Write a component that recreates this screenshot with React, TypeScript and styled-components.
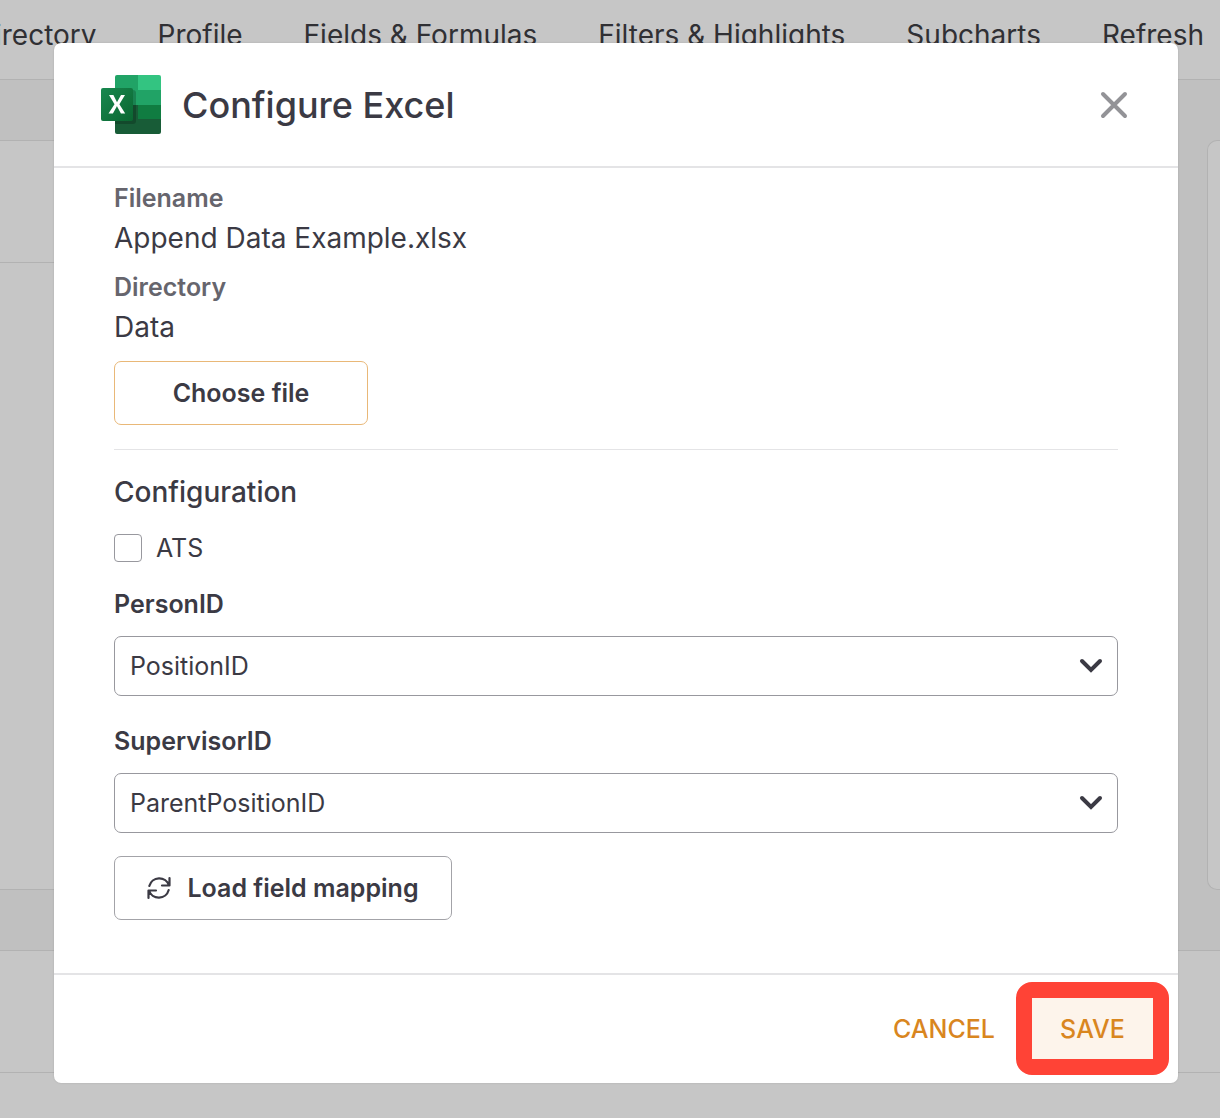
import React from "react";
import styled, { createGlobalStyle } from "styled-components";

const ink = "#3b3a44";
const line = "#e4e4e6";

const GlobalStyle = createGlobalStyle`
  *, *::before, *::after { box-sizing: border-box; }
  body {
    margin: 0;
    background: #c6c6c6;
    color: ${ink};
    font-family: Inter, "Liberation Sans", sans-serif;
  }
  button, select, input { font: inherit; color: inherit; }
`;

const Page = styled.div`
  position: relative;
  min-height: 100vh;
  overflow: hidden;
`;

const Nav = styled.nav`
  display: flex;
  justify-content: flex-end;
  gap: 61px;
  height: 80px;
  padding: 15px 16px 0 0;
  border-bottom: 1px solid #b2b2b2;
`;

const NavLink = styled.a`
  color: #303034;
  font-size: 28px;
  line-height: 40px;
  text-decoration: none;
  white-space: nowrap;
`;

const Workspace = styled.div`
  display: flex;
  gap: 60px;
  padding: 60px 0;
  background: #c0c0c0;
  border-bottom: 1px solid #b2b2b2;
`;

const MainPanel = styled.div`
  flex: 1;
  background: #c6c6c6;
  border: solid #b2b2b2;
  border-width: 1px 1px 1px 0;
`;

const PanelHead = styled.div`
  height: 122px;
  border-bottom: 1px solid #b2b2b2;
`;

const PanelBody = styled.div`
  height: 626px;
`;

const SidePanel = styled.div`
  width: 13px;
  background: #c6c6c6;
  border: solid #b2b2b2;
  border-width: 1px 0 1px 1px;
  border-radius: 10px 0 0 10px;
`;

const PageFooter = styled.div`
  height: 122px;
  border-bottom: 1px solid #b2b2b2;
`;

const Overlay = styled.div`
  position: absolute;
  inset: 0;
  padding: 43px 42px 36px 54px;
`;

const Dialog = styled.section`
  background: #fff;
  border-radius: 7px;
  box-shadow: 0 0 2px rgba(0, 0, 0, 0.15);
`;

const DialogHeader = styled.header`
  display: flex;
  align-items: center;
  gap: 21px;
  height: 125px;
  padding: 0 50px 0 47px;
  border-bottom: 2px solid ${line};
`;

const Title = styled.h1`
  flex: 1;
  margin: 0;
  font-size: 36px;
  font-weight: 500;
  line-height: 44px;
`;

const CloseButton = styled.button`
  display: flex;
  padding: 0;
  border: 0;
  background: none;
  cursor: pointer;
`;

const DialogBody = styled.div`
  padding: 10px 60px 53px;
`;

const FileDetails = styled.dl`
  display: grid;
  gap: 9px;
  margin: 0 0 14px;
`;

const Term = styled.dt`
  color: #66656d;
  font-size: 25px;
  font-weight: 600;
  line-height: 40px;
`;

const Value = styled.dd`
  margin: 0;
  font-size: 28px;
  line-height: 40px;
`;

const OutlineButton = styled.button<{ $accent?: boolean; $width: number }>`
  display: flex;
  align-items: center;
  justify-content: center;
  gap: 16px;
  width: ${(p) => p.$width}px;
  height: 64px;
  padding: 0;
  background: #fff;
  border: 1px solid ${(p) => (p.$accent ? "#e9b878" : "#a3a3a8")};
  border-radius: 7px;
  font-size: 25px;
  font-weight: 600;
  cursor: pointer;
`;

const Divider = styled.hr`
  height: 1px;
  margin: 24px 0 22px;
  border: 0;
  background: ${line};
`;

const SectionTitle = styled.h2`
  margin: 0;
  font-size: 28px;
  font-weight: 500;
  line-height: 40px;
`;

const CheckRow = styled.label`
  display: flex;
  align-items: center;
  gap: 14px;
  margin: 16px 0;
  font-size: 25px;
  line-height: 40px;
`;

const CheckBox = styled.input`
  appearance: none;
  width: 28px;
  height: 28px;
  margin: 0;
  border: 1px solid #98989e;
  border-radius: 4px;
  background: #fff;
`;

const Fields = styled.div`
  display: grid;
  gap: 25px;
  margin-bottom: 23px;
`;

const Field = styled.div`
  display: grid;
  gap: 12px;
`;

const FieldLabel = styled.label`
  font-size: 25px;
  font-weight: 600;
  line-height: 40px;
`;

const SelectBox = styled.div`
  display: grid;
  align-items: center;

  > * { grid-area: 1 / 1; }
  > svg { justify-self: end; margin-right: 15px; pointer-events: none; }
`;

const Select = styled.select`
  appearance: none;
  width: 100%;
  height: 60px;
  padding: 0 50px 0 15px;
  border: 1px solid #98989e;
  border-radius: 7px;
  background: #fff;
  font-size: 25px;
`;

const DialogFooter = styled.footer`
  display: flex;
  align-items: center;
  justify-content: flex-end;
  gap: 21px;
  padding: 7px 9px 8px;
  border-top: 2px solid ${line};
`;

const TextButton = styled.button`
  padding: 0;
  border: 0;
  background: none;
  color: #d9861f;
  font-size: 25px;
  font-weight: 500;
  line-height: 40px;
  cursor: pointer;
`;

const SaveButton = styled(TextButton)`
  width: 153px;
  height: 93px;
  border: 16px solid #ff4336;
  border-radius: 16px;
  background: #fdf4eb;
`;

const ExcelLogo = () => (
  <svg width="60" height="60" viewBox="0 0 60 60" aria-hidden="true">
    <defs>
      <clipPath id="book">
        <rect x="14" y="0" width="46" height="59" rx="2" />
      </clipPath>
      <linearGradient id="tile" x1="0" y1="0" x2="1" y2="1">
        <stop offset="0" stopColor="#18884f" />
        <stop offset="1" stopColor="#0b6631" />
      </linearGradient>
    </defs>
    <g clipPath="url(#book)">
      <rect x="14" width="23" height="15" fill="#21a366" />
      <rect x="37" width="23" height="15" fill="#33c481" />
      <rect x="14" y="15" width="23" height="15" fill="#21a366" />
      <rect x="37" y="15" width="23" height="15" fill="#21a366" />
      <rect x="14" y="30" width="23" height="15" fill="#185c37" />
      <rect x="37" y="30" width="23" height="15" fill="#107c41" />
      <rect x="14" y="44" width="46" height="15" fill="#185c37" />
      <path d="M14 15h18q3 0 3 3v28q0 3-3 3H14z" fill="#000" opacity=".2" />
    </g>
    <rect y="13" width="32" height="33" rx="2" fill="url(#tile)" />
    <path
      d="M7.5 38.5 13.5 29.2 8 20h4.4l3 5.9.6 1.3.8-1.5L20 20h4l-5.6 9.2 5.8 9.3h-4.3l-3.5-6.5-.5-1-.4 1-3.6 6.5z"
      fill="#fff"
    />
  </svg>
);

const CloseIcon = () => (
  <svg width="28" height="28" viewBox="0 0 28 28" fill="none" stroke="#939397" strokeWidth="4" strokeLinecap="round" aria-hidden="true">
    <path d="M3 3l22 22M25 3L3 25" />
  </svg>
);

const Chevron = () => (
  <svg width="24" height="16" viewBox="0 0 24 16" fill="none" stroke={ink} strokeWidth="4" strokeLinecap="round" aria-hidden="true">
    <path d="M3 3l9 9 9-9" />
  </svg>
);

const SyncIcon = () => (
  <svg width="24" height="24" viewBox="0 0 24 24" fill="none" stroke={ink} strokeWidth="2.2" strokeLinecap="round" strokeLinejoin="round" aria-hidden="true">
    <path d="M22.5 2v7.5H15M22 9.3A10.3 10.3 0 0 0 2.3 10M1.5 22v-7.5H9M2 14.7A10.3 10.3 0 0 0 21.7 14" />
  </svg>
);

const navItems = ["Directory", "Profile", "Fields & Formulas", "Filters & Highlights", "Subcharts", "Refresh"];

const SelectField = ({ id, label, value }: { id: string; label: string; value: string }) => (
  <Field>
    <FieldLabel htmlFor={id}>{label}</FieldLabel>
    <SelectBox>
      <Select id={id} defaultValue={value}>
        <option>{value}</option>
      </Select>
      <Chevron />
    </SelectBox>
  </Field>
);

export default function App() {
  return (
    <Page>
      <GlobalStyle />
      <Nav>
        {navItems.map((item) => (
          <NavLink href="#" key={item}>{item}</NavLink>
        ))}
      </Nav>
      <Workspace>
        <MainPanel>
          <PanelHead />
          <PanelBody />
        </MainPanel>
        <SidePanel />
      </Workspace>
      <PageFooter />
      <Overlay>
        <Dialog role="dialog" aria-labelledby="dialog-title">
          <DialogHeader>
            <ExcelLogo />
            <Title id="dialog-title">Configure Excel</Title>
            <CloseButton aria-label="Close"><CloseIcon /></CloseButton>
          </DialogHeader>
          <DialogBody>
            <FileDetails>
              <div>
                <Term>Filename</Term>
                <Value>Append Data Example.xlsx</Value>
              </div>
              <div>
                <Term>Directory</Term>
                <Value>Data</Value>
              </div>
            </FileDetails>
            <OutlineButton $accent $width={254}>Choose file</OutlineButton>
            <Divider />
            <SectionTitle>Configuration</SectionTitle>
            <CheckRow>
              <CheckBox type="checkbox" />
              ATS
            </CheckRow>
            <Fields>
              <SelectField id="person" label="PersonID" value="PositionID" />
              <SelectField id="supervisor" label="SupervisorID" value="ParentPositionID" />
            </Fields>
            <OutlineButton $width={338}><SyncIcon />Load field mapping</OutlineButton>
          </DialogBody>
          <DialogFooter>
            <TextButton>CANCEL</TextButton>
            <SaveButton>SAVE</SaveButton>
          </DialogFooter>
        </Dialog>
      </Overlay>
    </Page>
  );
}
